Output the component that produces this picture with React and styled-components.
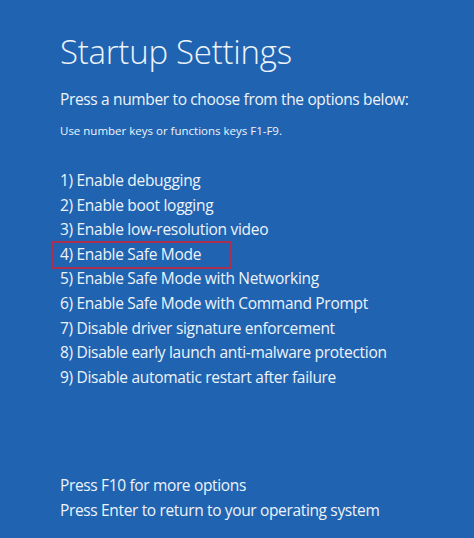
import React from "react";
import styled, { createGlobalStyle } from "styled-components";

const Global = createGlobalStyle`
  html, body { margin: 0; padding: 0; background: #2064b1; }
  * { box-sizing: border-box; }
`;

const Screen = styled.div`
  width: 474px;
  height: 538px;
  background: #2064b1;
  color: #eef3fa;
  font-family: "Open Sans", "Noto Sans", sans-serif;
  padding: 30px 0 0 60px;
  display: flex;
  flex-direction: column;
`;

const Title = styled.h1`
  margin: 0;
  font-size: 33px;
  font-weight: 300;
  line-height: 44px;
  letter-spacing: -0.25px;
`;

const Prompt = styled.p`
  margin: 14px 0 0;
  font-size: 15.5px;
  line-height: 22px;
  letter-spacing: -0.35px;
`;

const Hint = styled.p`
  margin: 12px 0 0;
  font-size: 11.5px;
  line-height: 18px;
`;

const List = styled.ol`
  list-style: none;
  margin: 28px 0 0;
  padding: 0;
  display: flex;
  flex-direction: column;
`;

const Item = styled.li`
  font-size: 15.5px;
  line-height: 24.6px;
  letter-spacing: -0.3px;
  position: relative;
  width: fit-content;
`;

const Highlight = styled.span`
  position: absolute;
  left: -8px;
  top: -1px;
  width: 180px;
  height: 28px;
  border: 2px solid #ad2f50;
  pointer-events: none;
`;

const Footer = styled.div`
  margin-top: auto;
  padding-bottom: 15px;
  display: flex;
  flex-direction: column;
`;

const FooterLine = styled.div`
  font-size: 15.5px;
  line-height: 25px;
  letter-spacing: -0.35px;
`;

const options = [
  "1) Enable debugging",
  "2) Enable boot logging",
  "3) Enable low-resolution video",
  "4) Enable Safe Mode",
  "5) Enable Safe Mode with Networking",
  "6) Enable Safe Mode with Command Prompt",
  "7) Disable driver signature enforcement",
  "8) Disable early launch anti-malware protection",
  "9) Disable automatic restart after failure",
];

export default function App() {
  return (
    <>
      <Global />
      <Screen>
        <Title>Startup Settings</Title>
        <Prompt>Press a number to choose from the options below:</Prompt>
        <Hint>Use number keys or functions keys F1-F9.</Hint>
        <List>
          {options.map((o, i) => (
            <Item key={o}>
              {o}
              {i === 3 && <Highlight />}
            </Item>
          ))}
        </List>
        <Footer>
          <FooterLine>Press F10 for more options</FooterLine>
          <FooterLine>Press Enter to return to your operating system</FooterLine>
        </Footer>
      </Screen>
    </>
  );
}
